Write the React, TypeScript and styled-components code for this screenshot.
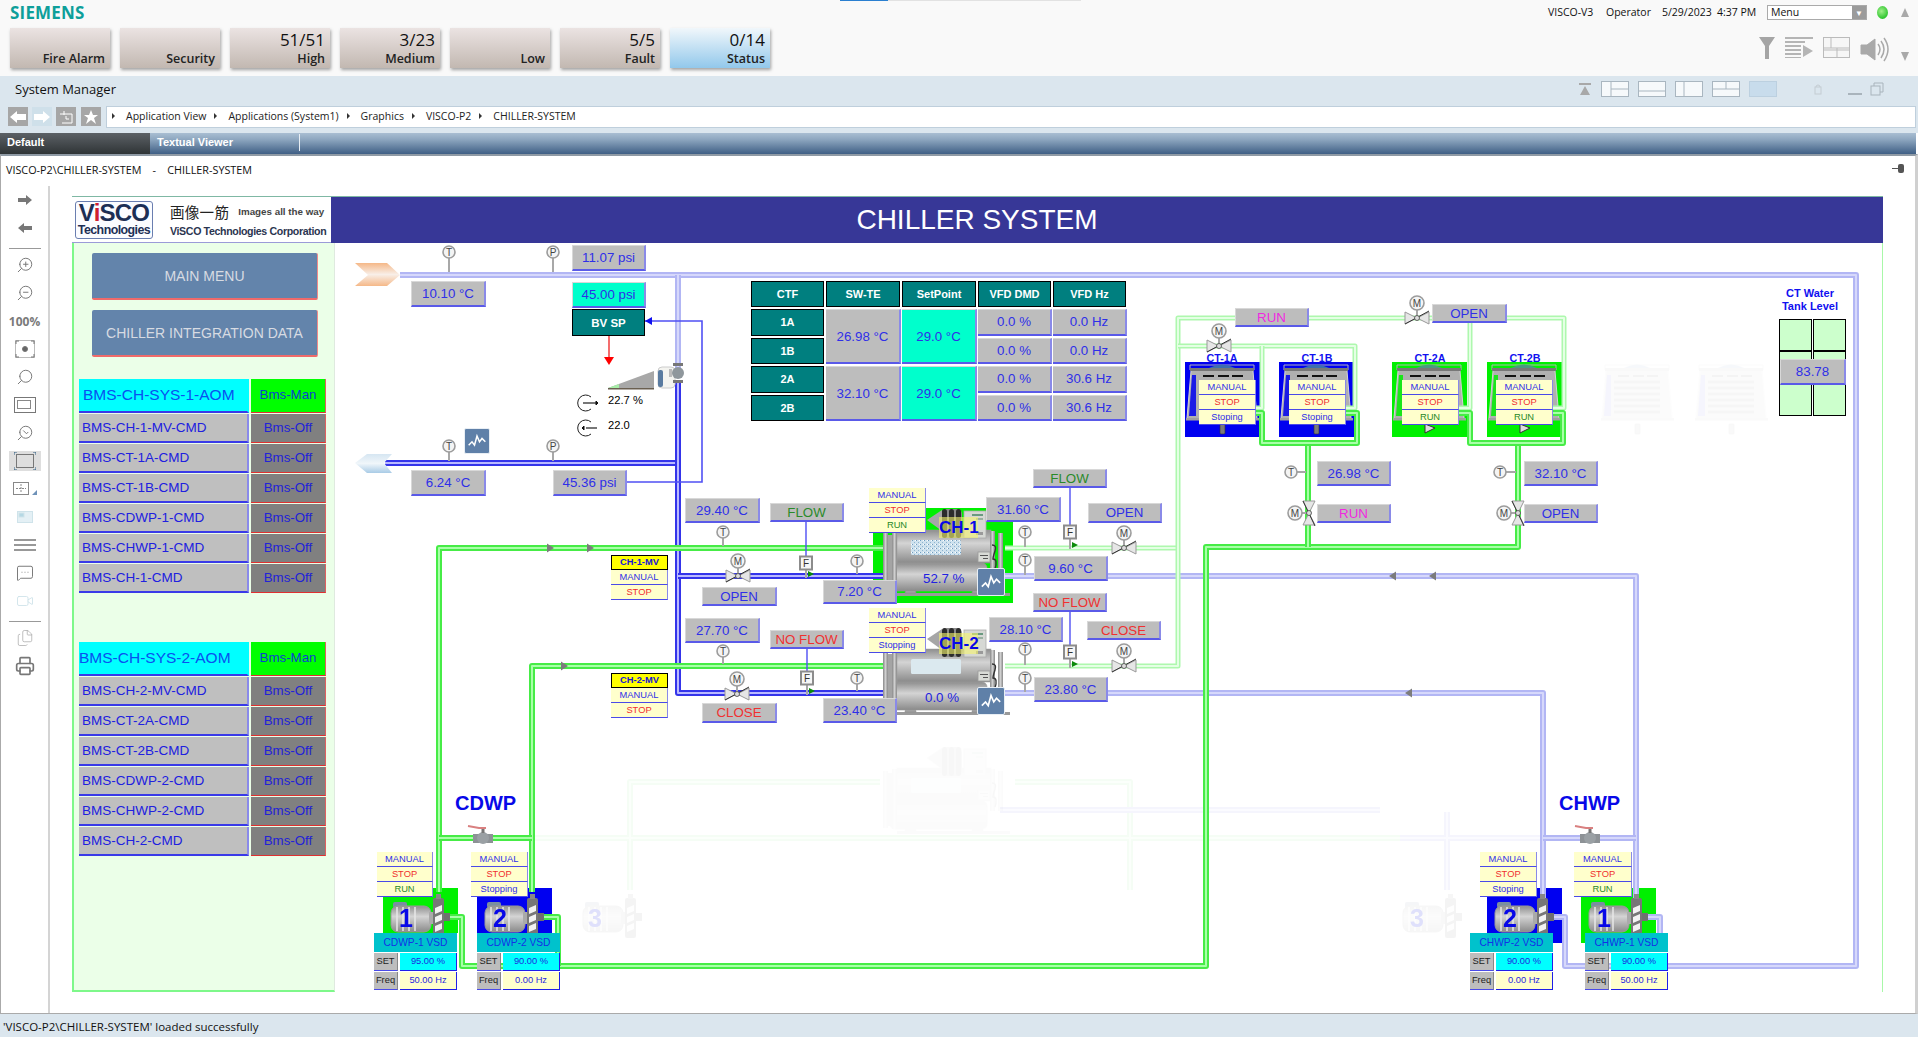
import React from "react";
import styled, { createGlobalStyle, css } from "styled-components";
import { ZoomIn, ZoomOut, Search, SearchCheck, Printer, Files, Video, MessageSquareMore } from "lucide-react";

const Global = createGlobalStyle`
  html, body { margin: 0; padding: 0; background: #fff; }
  #root { width: 1918px; height: 1037px; }
  * { box-sizing: border-box; }
`;

const Page = styled.div`
  width: 1918px;
  height: 1037px;
  display: flex;
  flex-direction: column;
  overflow: hidden;
  font-family: "Open Sans", "Liberation Sans", sans-serif;
  background: #fff;
  color: #111;
`;

/* ---------- top alarm bar ---------- */
const TopBar = styled.header`
  position: relative;
  height: 76px;
  flex: none;
  background: #f9f9f9;
  display: flex;
  justify-content: space-between;
`;
const Progress = styled.div`
  position: absolute;
  left: 840px;
  top: 0;
  width: 241px;
  height: 1px;
  background: linear-gradient(90deg, #2a7fd0 0 48px, #e2e2e2 48px);
`;
const LeftTop = styled.div`
  display: flex;
  flex-direction: column;
  padding: 3px 0 0 10px;
`;
const Brand = styled.div`
  font-family: "Open Sans", sans-serif;
  font-weight: 700;
  font-size: 17px;
  line-height: 19px;
  height: 25px;
  color: #0e9f9a;
  letter-spacing: 0.2px;
`;
const AlarmRow = styled.div`
  display: flex;
  gap: 10px;
`;
const AlarmButton = styled.div<{ $active?: boolean }>`
  width: 100px;
  height: 40px;
  background: ${(p) =>
    p.$active ? "linear-gradient(#f1f7fb, #92c8eb)" : "linear-gradient(#ebe3e2, #c2b8b1)"};
  box-shadow: 1px 2px 3px rgba(0, 0, 0, 0.35);
  display: flex;
  flex-direction: column;
  justify-content: flex-end;
  align-items: flex-end;
  padding: 0 5px 1px 0;
`;
const AlarmCount = styled.div`
  font-size: 17px;
  line-height: 21px;
  color: #111;
`;
const AlarmName = styled.div`
  font-size: 12.5px;
  line-height: 17px;
  font-weight: 600;
  color: #222;
`;
const RightTop = styled.div`
  display: flex;
  flex-direction: column;
  align-items: flex-end;
  padding: 5px 9px 0 0;
`;
const StatusLine = styled.div`
  display: flex;
  align-items: center;
  height: 14px;
  font-size: 10.5px;
`;
const StatusText = styled.span<{ $w: number }>`
  width: ${(p) => p.$w}px;
  white-space: nowrap;
`;
const MenuBox = styled.div`
  width: 100px;
  height: 15px;
  margin-right: 10px;
  border: 1px solid #aaa;
  background: #fff;
  display: flex;
  justify-content: space-between;
  align-items: stretch;
  font-size: 10.5px;
  line-height: 13px;
  padding-left: 3px;
`;
const MenuCaret = styled.div`
  width: 14px;
  background: #9b9b9b;
  color: #fff;
  font-size: 8px;
  text-align: center;
`;
const Lamp = styled.div`
  width: 11px;
  height: 13px;
  border-radius: 50%;
  background: radial-gradient(circle at 40% 40%, #a0f08a, #2fc52f 70%);
  margin-right: 13px;
`;
const ToolIcons = styled.div`
  display: flex;
  align-items: flex-start;
  gap: 10px;
  margin-top: 17px;
  margin-right: 11px;
  height: 24px;
`;
const Arrowlet = styled.div<{ $up?: boolean }>`
  width: 0;
  height: 0;
  border-left: 4px solid transparent;
  border-right: 4px solid transparent;
  ${(p) =>
    p.$up ? "border-bottom: 9px solid #a9a9a9;" : "border-top: 9px solid #a9a9a9;"}
`;
const DownSlot = styled.div`
  height: 42px;
  display: flex;
  align-items: flex-end;
  justify-content: flex-end;
  gap: 0;
`;

/* ---------- system manager band ---------- */
const Manager = styled.section`
  height: 57px;
  flex: none;
  background: #dbe6ee;
  display: flex;
  flex-direction: column;
`;
const ManagerTop = styled.div`
  height: 29px;
  display: flex;
  justify-content: space-between;
  align-items: center;
  padding: 0 32px 3px 15px;
  font-size: 13px;
`;
const PaneIcons = styled.div`
  display: flex;
  align-items: center;
  gap: 9px;
`;
const PaneIcon = styled.svg`
  width: 28px;
  height: 16px;
  display: block;
`;
const Crumbs = styled.div`
  height: 23px;
  display: flex;
  align-items: center;
  padding-left: 8px;
`;
const NavBtn = styled.div<{ $pale?: boolean; $gap: number }>`
  width: 20px;
  height: 19px;
  margin-right: ${(p) => p.$gap}px;
  background: ${(p) => (p.$pale ? "#cfe0ea" : "#a6a6a6")};
  display: flex;
  align-items: center;
  justify-content: center;
  color: #fff;
`;
const CrumbBar = styled.div`
  flex: 1;
  height: 22px;
  margin-right: 2px;
  background: #fff;
  border: 1px solid #bfcfdc;
  display: flex;
  align-items: center;
  padding: 0 0 2px 5px;
  font-size: 10.5px;
  color: #222;
`;
const Crumb = styled.span`
  white-space: nowrap;
  &::before {
    content: "";
    display: inline-block;
    border-left: 3px solid #333;
    border-top: 3px solid transparent;
    border-bottom: 3px solid transparent;
    margin: 0 11px 1px 8px;
  }
  &:first-child::before {
    margin-left: 0;
  }
`;

const TabStrip = styled.nav`
  height: 21px;
  flex: none;
  display: flex;
  background: linear-gradient(#a9bed2, #8ea7c0 30%, #3f5f85);
  margin-right: 2px;
  color: #fff;
  font-family: "Liberation Sans", sans-serif;
  font-weight: 700;
  font-size: 11px;
  line-height: 18px;
`;
const Tab = styled.div<{ $on?: boolean }>`
  width: 150px;
  padding-left: 7px;
  background: ${(p) => (p.$on ? "linear-gradient(#5c6166, #2f3436)" : "transparent")};
  ${(p) =>
    !p.$on &&
    css`
      border-right: 1px solid #e8eef4;
      height: 17px;
      margin-top: 1px;
      line-height: 16px;
    `}
`;

/* ---------- content frame ---------- */
const Frame = styled.main`
  flex: 1;
  display: flex;
  flex-direction: column;
  border-top: 2px solid #8f9aa5;
  border-left: 1px solid #aaa;
  border-right: 3px solid #d0d0d0;
  border-bottom: 1px solid #aaa;
  min-height: 0;
`;
const PathRow = styled.div`
  height: 30px;
  flex: none;
  display: flex;
  justify-content: space-between;
  align-items: center;
  padding: 0 9px 4px 5px;
  font-size: 10.8px;
  white-space: pre;
`;
const Body = styled.div`
  flex: 1;
  display: flex;
  min-height: 0;
`;
const Toolbar = styled.aside`
  width: 49px;
  flex: none;
  border-right: 2px solid #d4d4d4;
  display: flex;
  flex-direction: column;
  align-items: center;
  color: #777;
`;
const ToolItem = styled.div<{ $on?: boolean; $pale?: boolean }>`
  width: 32px;
  height: 28px;
  display: flex;
  align-items: center;
  justify-content: center;
  color: ${(p) => (p.$pale ? "#cfe3ea" : "#777")};
  background: ${(p) => (p.$on ? "linear-gradient(#fff 0 4px, #dedede 4px 24px, #fff 24px)" : "transparent")};
`;
const ToolFlip = styled.span`
  display: flex;
  transform: scaleX(-1);
`;
const ToolSep = styled.div`
  width: 32px;
  height: 10px;
  flex: none;
  border-bottom: 1px solid #999;
  margin-bottom: 2px;
  margin-top: -3px;
`;
const Percent = styled.div`
  font-weight: 700;
  font-size: 12px;
  color: #7a7a7a;
`;
const CanvasWrap = styled.div`
  margin: 10px 0 0 22px;
  width: 1811px;
  height: 796px;
  display: flex;
  flex-direction: column;
`;
const Header = styled.div`
  height: 47px;
  flex: none;
  display: flex;
  border-top: 1px solid #7fb8a4;
`;
const LogoBlock = styled.div`
  width: 259px;
  flex: none;
  display: flex;
  align-items: center;
  padding: 0 0 0 3px;
  background: #fff;
  border-bottom: 1px solid #9b9bd8;
`;
const LogoMark = styled.div`
  width: 78px;
  height: 38px;
  border: 1px solid #6a7eb0;
  border-radius: 3px;
  display: flex;
  flex-direction: column;
  align-items: center;
  font-family: "Liberation Sans", sans-serif;
  font-weight: 700;
  color: #1d2f55;
  background: #fbfcff;
`;
const LogoBig = styled.div`
  font-size: 24px;
  line-height: 22px;
  letter-spacing: -0.8px;
`;
const LogoSmall = styled.div`
  font-size: 12.4px;
  line-height: 13px;
  letter-spacing: -0.55px;
`;
const LogoDot = styled.span`
  color: #d02030;
`;
const LogoText = styled.div`
  margin-left: 17px;
  display: flex;
  flex-direction: column;
`;
const LogoTop = styled.div`
  display: flex;
  align-items: center;
  gap: 9px;
  height: 22px;
  font-family: "Liberation Sans", sans-serif;
  font-weight: 700;
  font-size: 9.8px;
  color: #444;
  white-space: nowrap;
`;
const LogoKanji = styled.span`
  font-family: "Noto Sans CJK JP", sans-serif;
  font-weight: 400;
  font-size: 14.5px;
  letter-spacing: 0.3px;
  color: #222;
`;
const LogoCorp = styled.div`
  font-family: "Liberation Sans", sans-serif;
  font-weight: 700;
  font-size: 10.6px;
  line-height: 16px;
  letter-spacing: -0.35px;
  color: #2b3550;
  white-space: nowrap;
`;
const TitleBar = styled.div`
  flex: 1;
  background: #373797;
  color: #fff;
  font-family: "Liberation Sans", sans-serif;
  font-size: 28px;
  display: flex;
  align-items: center;
  justify-content: center;
  padding-right: 260px;
`;
const Lower = styled.div`
  flex: 1;
  display: flex;
  min-height: 0;
`;
const SidePanel = styled.div`
  width: 263px;
  flex: none;
  background: #ebffe8;
  border-left: 2px solid #7ef88a;
  border-bottom: 2px solid #7ef88a;
  border-right: 1px solid #dfeadf;
  padding: 10px 0 0 5px;
  font-family: "Liberation Sans", sans-serif;
`;
const BigButton = styled.div`
  width: 226px;
  height: 47px;
  margin: 0 0 10px 13px;
  background: #6384ab;
  border-right: 1px solid #f08a8a;
  border-bottom: 2px solid #f06a6a;
  border-radius: 2px;
  color: #d7dbe2;
  font-size: 14px;
  display: flex;
  align-items: center;
  justify-content: center;
`;
const Group = styled.div<{ $top: number }>`
  margin-top: ${(p) => p.$top}px;
  display: grid;
  grid-template-columns: 170px 75px;
  column-gap: 2px;
  row-gap: 1px;
  grid-template-rows: 34px repeat(6, 29px);
`;
const RowName = styled.div<{ $head?: boolean; $tight?: boolean }>`
  background: ${(p) => (p.$head ? "#00ffff" : "#bfbfbf")};
  border-bottom: 2px solid #3a3ae8;
  border-right: 2px solid ${(p) => (p.$head ? "#00ffff" : "#8a8aea")};
  color: ${(p) => (p.$head ? "#0a50f0" : "#2020e0")};
  font-size: ${(p) => (p.$head ? 15.5 : 13.5)}px;
  line-height: ${(p) => (p.$head ? 32 : 27)}px;
  padding-left: ${(p) => (p.$tight ? 0 : p.$head ? 4 : 3)}px;
  white-space: nowrap;
`;
const RowState = styled.div<{ $man?: boolean }>`
  background: ${(p) => (p.$man ? "#00ff00" : "#808080")};
  border-bottom: 1px solid #e03030;
  border-right: 1px solid #e06060;
  color: ${(p) => (p.$man ? "#0a3fd0" : "#2222d8")};
  font-size: 13.3px;
  line-height: ${(p) => (p.$man ? 32 : 27)}px;
  text-align: center;
`;

/* ---------- free canvas of the plant diagram ---------- */
const OX = 335;
const OY = 243;
const Diagram = styled.div`
  position: relative;
  flex: 1;
  background: #fff;
  border-right: 1px solid #a8f8a8;
  font-family: "Liberation Sans", sans-serif;
  overflow: hidden;
`;
const Drawing = styled.svg`
  position: absolute;
  left: 0;
  top: 0;
  width: 1548px;
  height: 749px;
  text {
    font-family: "Liberation Sans", sans-serif;
  }
`;
const placed = css<{ $x: number; $y: number }>`
  position: absolute;
  left: ${(p) => p.$x - OX}px;
  top: ${(p) => p.$y - OY}px;
`;
type Tone = "blue" | "green" | "red" | "pink";
const toneColor: Record<Tone, string> = { blue: "#2f2fe8", green: "#2a8a2a", red: "#f03030", pink: "#f028e0" };

const ValueBox = styled.div<{ $x: number; $y: number; $w: number; $h: number; $tone: Tone; $bg?: string }>`
  ${placed}
  width: ${(p) => p.$w}px;
  height: ${(p) => p.$h}px;
  background: ${(p) => p.$bg ?? "#bdbdbd"};
  border-top: 1px solid #d8d8d8;
  border-left: 1px solid #d8d8d8;
  border-right: 2px solid #8a8ae8;
  border-bottom: 2px solid #5a5ae8;
  color: ${(p) => toneColor[p.$tone]};
  font-size: 13.3px;
  display: flex;
  align-items: center;
  justify-content: center;
  white-space: nowrap;
`;
const SetBlock = styled.div<{ $x: number; $y: number }>`
  ${placed}
  width: 73px;
  height: 27px;
  background: #007f7f;
  border: 1px solid #000;
  color: #fff;
  font-size: 11.5px;
  font-weight: 700;
  display: flex;
  align-items: center;
  justify-content: center;
`;
const Reading = styled.div<{ $x: number; $y: number }>`
  ${placed}
  font-size: 11.2px;
  color: #000;
  white-space: nowrap;
`;
const StatusStack = styled.div<{ $x: number; $y: number; $w: number }>`
  ${placed}
  width: ${(p) => p.$w}px;
  display: flex;
  flex-direction: column;
`;
const StackRow = styled.div<{ $tone: Tone }>`
  height: 15px;
  background: #ffffcc;
  color: ${(p) => toneColor[p.$tone]};
  border-bottom: 1px solid #4a4ae8;
  border-right: 1px solid #8a8ae8;
  font-size: 9.33px;
  line-height: 14px;
  text-align: center;
  white-space: nowrap;
`;
const StackHead = styled.div`
  height: 15px;
  background: #ffff00;
  border: 1px solid #000;
  color: #1515d8;
  font-size: 9.33px;
  font-weight: 700;
  line-height: 13px;
  text-align: center;
`;
const Table = styled.div<{ $x: number; $y: number }>`
  ${placed}
  display: grid;
  grid-template-columns: 75px 76px 76px 75px 75px;
  grid-template-rows: 26px repeat(4, 26.5px);
  row-gap: 2px;
  width: 377px;
`;
const TableHead = styled.div`
  margin-right: 2px;
  background: #007f7f;
  border: 1px solid #000;
  color: #fff;
  font-size: 11px;
  font-weight: 700;
  display: flex;
  align-items: center;
  justify-content: center;
`;
const TableCell = styled.div<{ $span?: boolean; $set?: boolean }>`
  grid-row: ${(p) => (p.$span ? "span 2" : "auto")};
  margin-right: 1px;
  background: ${(p) => (p.$set ? "#00ffcc" : "#bdbdbd")};
  border-top: 1px solid #d8d8d8;
  border-right: 2px solid #8a8ae8;
  border-bottom: 2px solid #5a5ae8;
  color: #2f2fe8;
  font-size: 13.3px;
  display: flex;
  align-items: center;
  justify-content: center;
  white-space: nowrap;
`;
const UnitTag = styled.div<{ $x: number; $y: number }>`
  ${placed}
  width: 39px;
  height: 21px;
  background: rgba(245, 245, 110, 0.6);
  color: #0808e8;
  font-size: 17px;
  font-weight: 700;
  line-height: 21px;
  text-align: center;
  white-space: nowrap;
`;
const LoadText = styled.div<{ $x: number; $y: number }>`
  ${placed}
  color: #2222e0;
  font-size: 13.3px;
  white-space: nowrap;
`;
const TrendButton = styled.div<{ $x: number; $y: number; $s: number }>`
  ${placed}
  width: ${(p) => p.$s}px;
  height: ${(p) => p.$s}px;
  background: #5f80a8;
  border: 1px solid #e8eef4;
  border-radius: 2px;
  display: flex;
  align-items: center;
  justify-content: center;
`;
const PumpTitle = styled.div<{ $x: number; $y: number }>`
  ${placed}
  color: #0808e8;
  font-size: 20px;
  font-weight: 700;
`;
const TowerName = styled.div<{ $x: number; $y: number }>`
  ${placed}
  width: 60px;
  text-align: center;
  color: #1010f0;
  font-size: 10.7px;
  font-weight: 700;
  line-height: 12px;
`;
const TankTitle = styled.div<{ $x: number; $y: number }>`
  ${placed}
  width: 66px;
  text-align: center;
  color: #1010f0;
  font-size: 11px;
  font-weight: 700;
  line-height: 13px;
`;
const TankBody = styled.div<{ $x: number; $y: number }>`
  ${placed}
  width: 67px;
  height: 97px;
  display: grid;
  grid-template-columns: 1fr 1fr;
  grid-template-rows: 1fr 2fr;
  column-gap: 1px;
  background: #fff;
`;
const TankPane = styled.div`
  background: #ccffcc;
  border: 1px solid #000;
`;
const Vsd = styled.div<{ $x: number; $y: number }>`
  ${placed}
  width: 83px;
  display: grid;
  grid-template-columns: 24px 57px;
  column-gap: 2px;
  row-gap: 1px;
  grid-template-rows: 19px 18px 18px;
`;
const VsdHead = styled.div`
  grid-column: 1 / 3;
  background: #00c2cc;
  color: #1330e8;
  font-size: 10.2px;
  line-height: 19px;
  text-align: center;
  white-space: nowrap;
`;
const VsdKey = styled.div`
  background: #bdbdbd;
  border-right: 1px solid #888;
  border-bottom: 1px solid #4a4ae8;
  color: #222;
  font-size: 9.3px;
  line-height: 17px;
  text-align: center;
`;
const VsdVal = styled.div<{ $set?: boolean }>`
  background: ${(p) => (p.$set ? "#00ffff" : "#ffffcc")};
  border-right: 1px solid #1f1fe8;
  border-bottom: 1px solid #1f1fe8;
  color: #1f1fe0;
  font-size: 9.3px;
  line-height: 17px;
  text-align: center;
  white-space: nowrap;
`;
const TankValue = styled(ValueBox)`
  z-index: 2;
`;

const StatusBar = styled.footer`
  height: 23px;
  flex: none;
  background: #dbe6ee;
  font-size: 11.5px;
  line-height: 26px;
  padding-left: 3px;
`;

/* ---------- drawing helpers ---------- */
type PipeKind = "dark" | "light" | "green" | "pale" | "ghost" | "ghostBlue";
const pipeStyle: Record<PipeKind, [string, string, number, number]> = {
  dark: ["#3434ea", "#b9b9ff", 6, 2],
  light: ["#b2b6f4", "#d6d8fb", 6, 2],
  green: ["#46ec46", "#a8ffa8", 6, 2],
  pale: ["#aef8ae", "#e4ffe4", 5, 2],
  ghost: ["#f5fdf5", "#fbfffb", 6, 2],
  ghostBlue: ["#f5f5fd", "#fbfbff", 6, 2],
};
const Pipe = ({ d, kind }: { d: string; kind: PipeKind }) => {
  const [outer, inner, a, b] = pipeStyle[kind];
  return (
    <g fill="none" strokeLinejoin="round">
      <path d={d} stroke={outer} strokeWidth={a} />
      <path d={d} stroke={inner} strokeWidth={b} />
    </g>
  );
};

const Sensor = ({ x, y, to, l, side }: { x: number; y: number; to: number; l: string; side?: boolean }) => (
  <g>
    {side ? (
      <line x1={x} y1={y} x2={to} y2={y} stroke="#a8a8a8" strokeWidth={2} />
    ) : (
      <line x1={x} y1={y} x2={x} y2={to} stroke="#a8a8a8" strokeWidth={2} />
    )}
    <circle cx={x} cy={y} r={6} fill="#f4f4f4" stroke="#9c9c9c" strokeWidth={1.6} />
    <text x={x} y={y + 3.6} fontSize={10} textAnchor="middle" fill="#444">
      {l}
    </text>
  </g>
);

const Flow = ({ x, y, to }: { x: number; y: number; to: number }) => (
  <g>
    <line x1={x} y1={y} x2={x} y2={to} stroke="#a8a8a8" strokeWidth={2} />
    <rect x={x - 6} y={y - 6.5} width={12} height={13} fill="#f6f6f6" stroke="#8c8c8c" strokeWidth={2} />
    <text x={x} y={y + 3.6} fontSize={10} textAnchor="middle" fill="#333">
      F
    </text>
    <path d={`M${x + 2} ${to - 7} l6 3 l-6 3 z`} fill="#0a8a0a" />
  </g>
);

const Butterfly = ({ x, y }: { x: number; y: number }) => (
  <g>
    <line x1={x} y1={y - 15} x2={x} y2={y} stroke="#a8a8a8" strokeWidth={2} />
    <circle cx={x} cy={y - 15} r={7} fill="#f4f4f4" stroke="#9c9c9c" strokeWidth={1.6} />
    <text x={x} y={y - 11.4} fontSize={10} textAnchor="middle" fill="#444">
      M
    </text>
    <path d={`M${x - 12} ${y - 6} L${x} ${y} L${x - 12} ${y + 6} Z M${x + 12} ${y - 6} L${x} ${y} L${x + 12} ${y + 6} Z`} fill="#e6e6e6" stroke="#999" />
    <line x1={x - 12} y1={y + 6} x2={x + 12} y2={y - 7} stroke="#333" strokeWidth={1} />
    <circle cx={x} cy={y} r={2.5} fill="#ddd" stroke="#444" strokeWidth={0.8} />
  </g>
);

const ButterflyUpright = ({ x, y }: { x: number; y: number }) => (
  <g>
    <line x1={x - 14} y1={y} x2={x} y2={y} stroke="#a8a8a8" strokeWidth={2} />
    <circle cx={x - 14} cy={y} r={7} fill="#f4f4f4" stroke="#9c9c9c" strokeWidth={1.6} />
    <text x={x - 14} y={y + 3.6} fontSize={10} textAnchor="middle" fill="#444">
      M
    </text>
    <path d={`M${x - 6} ${y - 12} L${x} ${y} L${x + 6} ${y - 12} Z M${x - 6} ${y + 12} L${x} ${y} L${x + 6} ${y + 12} Z`} fill="#e6e6e6" stroke="#999" />
    <line x1={x - 6} y1={y - 12} x2={x + 6} y2={y + 13} stroke="#333" strokeWidth={1} />
    <circle cx={x} cy={y} r={2.5} fill="#ddd" stroke="#444" strokeWidth={0.8} />
  </g>
);

const BallValve = ({ x, y }: { x: number; y: number }) => (
  <g>
    <rect x={x - 10} y={y - 4} width={20} height={9} fill="#8d9296" />
    <circle cx={x} cy={y} r={6} fill="#9aa0a4" />
    <rect x={x - 1.5} y={y - 10} width={3} height={5} fill="#777" />
    <path d={`M${x - 15} ${y - 12} L${x - 4} ${y - 10} L${x + 3} ${y - 10}`} stroke="#d98080" strokeWidth={2} fill="none" />
  </g>
);

const Tick = ({ x, y, dir }: { x: number; y: number; dir: 1 | -1 }) => (
  <path d={`M${x} ${y - 4.5} l${dir * 7} 4.5 l${-dir * 7} 4.5 z`} fill="#7c7c7c" />
);

const Chiller = ({ dy, frost, ghost }: { dy: number; frost?: boolean; ghost?: boolean }) => (
  <g transform={`translate(0 ${dy})`} opacity={ghost ? 0.03 : 1}>
    <rect x={897} y={593} width={113} height={3} fill="#9a9a9a" />
    <path d="M905 593 l2 -9 h7 l2 9 z M972 593 l2 -9 h7 l2 9 z" fill="#a4a4a4" stroke="#888" strokeWidth={0.6} />
    <rect x={890} y={563} width={97} height={28} rx={5} fill="url(#cyl)" stroke="#999" strokeWidth={0.6} />
    <rect x={897} y={530} width={94} height={33} fill="url(#cyl)" stroke="#a0a0a0" strokeWidth={0.5} />
    <rect x={883} y={533} width={5} height={57} fill="url(#cyl2)" />
    <rect x={888} y={535} width={4} height={53} fill="#a4a4a4" />
    <rect x={892} y={531} width={5} height={60} fill="url(#cyl2)" />
    <rect x={990} y={531} width={5} height={42} fill="url(#cyl2)" />
    <rect x={998} y={533} width={5} height={40} fill="url(#cyl2)" />
    <path d="M992 545 q5 0 3 6 t-2 8 q5 0 2 10" fill="none" stroke="#333" strokeWidth={1.4} />
    <rect x={911} y={540} width={50} height={15} rx={1.5} fill={frost ? "url(#frost)" : "#dbe9ef"} />
    <path d="M927 520 L942 510 V531 Z" fill="#a6a6a6" />
    <rect x={942} y={509} width={20} height={29} rx={5} fill="#8a8a8a" />
    <rect x={942} y={509} width={5} height={29} rx={2.5} fill="#2c2c2c" />
    <rect x={949} y={509} width={5} height={29} rx={2.5} fill="#2c2c2c" />
    <rect x={956} y={509} width={5} height={29} rx={2.5} fill="#2c2c2c" />
    <rect x={964} y={511} width={22} height={27} fill="#d6d8d4" stroke="#aaa" strokeWidth={0.8} />
    <rect x={972} y={514} width={11} height={2} fill="#6a9a80" />
    <rect x={976} y={518} width={7} height={2} fill="#9ab0a0" />
    <rect x={976} y={532} width={7} height={3} fill="#9a9a9a" />
    <rect x={978} y={552} width={12} height={10} fill="#d9dbd6" stroke="#999" strokeWidth={0.8} />
    <rect x={980} y={555} width={8} height={1} fill="#555" />
    <rect x={983} y={558} width={5} height={1} fill="#555" />
  </g>
);

const Pump = ({ x }: { x: number }) => (
  <g transform={`translate(${x} 888)`}>
    <rect x={10} y={14} width={14} height={6} rx={2} fill="#7a8ea0" />
    <rect x={8} y={18} width={40} height={26} rx={7} fill="url(#cyl)" stroke="#999" />
    <path d="M14 19 v24 M20 19 v24 M26 19 v24 M32 19 v24" stroke="#e8e8e8" strokeWidth={1.5} />
    <rect x={46} y={24} width={4} height={12} fill="#aaa" />
    <rect x={50} y={10} width={11} height={40} rx={2} fill="#777" />
    <rect x={53} y={6} width={5} height={5} fill="#888" />
    <path d="M52 20 l7 -3 v6 l-7 3 z M52 29 l7 -3 v6 l-7 3 z M52 38 l7 -3 v6 l-7 3 z" fill="#f2f2f2" />
    <rect x={61} y={25} width={6} height={8} fill="#707070" />
  </g>
);

const Tower = ({ x, on, ghost }: { x: number; on?: boolean; ghost?: boolean }) => (
  <g transform={`translate(${x} 362)`} opacity={ghost ? 0.04 : 1}>
    {!ghost && <rect x={0} y={0} width={75} height={75} fill={on ? "#00f000" : "#0000f0"} />}
    <path d="M5 3 H69 V8 H5 Z" fill="none" stroke="#b4b4b4" strokeWidth={1} />
    <path d="M24 6 q13 -7 26 0 Z" fill={on ? "#4a9a80" : "#3c6fae"} />
    <rect x={5} y={6} width={64} height={3} fill="#777" />
    <path d="M6 9 H68 L72 56 H2 Z" fill="#b0b0b0" />
    <path d="M6 9 L2 56 M68 9 L72 56" stroke="#d4d4d4" strokeWidth={1} />
    <path d="M7 13 L4 54 H11 V13 Z" fill={on ? "#00f000" : "#0000f0"} opacity={0.85} />
    <path d="M18 14 h11 M33 14 h11 M47 14 h11" stroke="#111" strokeWidth={2} />
    <rect x={1} y={56} width={73} height={2.5} fill="#a0a0a0" />
    {ghost && <path d="M14 20 H60 M14 26 H60 M14 32 H60 M14 38 H60 M14 44 H60 M14 50 H60" stroke="#444" strokeWidth={3} />}
    {on ? (
      <path d="M33 62 l10 4 l-10 5 z" fill="#ddd" stroke="#333" />
    ) : (
      <rect x={35} y={62} width={5} height={10} rx={1} fill="#7a7a7a" stroke="#333" strokeWidth={0.6} />
    )}
  </g>
);

const TrendGlyph = ({ s }: { s: number }) => (
  <svg width={s} height={s} viewBox="0 0 24 24" fill="none" stroke="#fff" strokeWidth={1.8}>
    <path d="M2 17 L6 13 L9 17 L12 6 L15 13 L18 9 L22 13" />
  </svg>
);

/* ---------- data ---------- */
type Box = [number, number, number, number, string, Tone?, string?];
const boxes: Box[] = [
  [572, 245, 646, 271, "11.07 psi"],
  [411, 281, 486, 307, "10.10 °C"],
  [572, 282, 646, 308, "45.00 psi", "blue", "#00ffcc"],
  [411, 470, 486, 496, "6.24 °C"],
  [553, 470, 627, 496, "45.36 psi"],
  [685, 498, 760, 523, "29.40 °C"],
  [770, 503, 844, 522, "FLOW", "green"],
  [1033, 469, 1107, 488, "FLOW", "green"],
  [986, 497, 1061, 522, "31.60 °C"],
  [1088, 503, 1162, 523, "OPEN"],
  [1034, 556, 1108, 581, "9.60 °C"],
  [702, 587, 777, 606, "OPEN"],
  [823, 580, 897, 604, "7.20 °C"],
  [685, 618, 760, 643, "27.70 °C"],
  [770, 630, 844, 649, "NO FLOW", "red"],
  [1033, 593, 1107, 612, "NO FLOW", "red"],
  [989, 617, 1063, 642, "28.10 °C"],
  [1087, 621, 1161, 640, "CLOSE", "red"],
  [1034, 677, 1108, 702, "23.80 °C"],
  [702, 703, 777, 723, "CLOSE", "red"],
  [823, 698, 897, 723, "23.40 °C"],
  [1235, 308, 1309, 327, "RUN", "pink"],
  [1432, 304, 1507, 323, "OPEN"],
  [1317, 461, 1391, 486, "26.98 °C"],
  [1524, 461, 1598, 486, "32.10 °C"],
  [1317, 504, 1391, 523, "RUN", "pink"],
  [1524, 504, 1598, 523, "OPEN"],
];

type Stack = [number, number, number, string, Tone];
const stacks: Stack[] = [
  [869, 488, 57, "RUN", "green"],
  [869, 608, 57, "Stopping", "blue"],
  [1199, 380, 57, "Stoping", "blue"],
  [1289, 380, 57, "Stoping", "blue"],
  [1402, 380, 57, "RUN", "green"],
  [1496, 380, 57, "RUN", "green"],
  [377, 852, 56, "RUN", "green"],
  [471, 852, 57, "Stopping", "blue"],
  [1480, 852, 57, "Stoping", "blue"],
  [1574, 852, 58, "RUN", "green"],
];

const vsds: [number, string, string, string][] = [
  [374, "CDWP-1 VSD", "95.00 %", "50.00 Hz"],
  [477, "CDWP-2 VSD", "90.00 %", "0.00 Hz"],
  [1470, "CHWP-2 VSD", "90.00 %", "0.00 Hz"],
  [1585, "CHWP-1 VSD", "90.00 %", "50.00 Hz"],
];

const rows1 = ["BMS-CH-1-MV-CMD", "BMS-CT-1A-CMD", "BMS-CT-1B-CMD", "BMS-CDWP-1-CMD", "BMS-CHWP-1-CMD", "BMS-CH-1-CMD"];
const rows2 = ["BMS-CH-2-MV-CMD", "BMS-CT-2A-CMD", "BMS-CT-2B-CMD", "BMS-CDWP-2-CMD", "BMS-CHWP-2-CMD", "BMS-CH-2-CMD"];

const alarms = [
  ["", "Fire Alarm"],
  ["", "Security"],
  ["51/51", "High"],
  ["3/23", "Medium"],
  ["", "Low"],
  ["5/5", "Fault"],
  ["0/14", "Status"],
];

const BmsGroup = ({ top, head, rows, tight }: { top: number; head: string; rows: string[]; tight?: boolean }) => (
  <Group $top={top}>
    <RowName $head $tight={tight}>
      {head}
    </RowName>
    <RowState $man>Bms-Man</RowState>
    {rows.map((r) => (
      <React.Fragment key={r}>
        <RowName>{r}</RowName>
        <RowState>Bms-Off</RowState>
      </React.Fragment>
    ))}
  </Group>
);

const PipeWork = () => (
  <>
    {/* faint pipes of the spare chiller and pumps */}
    <Pipe kind="ghost" d="M532 838 H1400 M630 890 V782 H880 M1015 782 H1130 V890" />
    <Pipe kind="ghostBlue" d="M1400 838 H1543 M1447 890 V812 M1000 810 H1380" />

    <Tower x={1185} />
    <Tower x={1279} />
    <Tower x={1392} on />
    <Tower x={1487} on />
    <Tower x={1600} ghost />
    <Tower x={1694} ghost />

    <rect x={873} y={508} width={140} height={95} fill="#00f000" />
    <rect x={383} y={888} width={75} height={45} fill="#00f000" />
    <rect x={477} y={888} width={75} height={45} fill="#0000f0" />
    <rect x={1487} y={888} width={75} height={55} fill="#0000f0" />
    <rect x={1581} y={888} width={75} height={55} fill="#00f000" />

    <Pipe kind="light" d="M400 275 H1856 V966 H1565 V917 H1550" />
    <Pipe kind="light" d="M1660 935 V917 H1645" />
    <Pipe kind="light" d="M678 275 V370" />
    <Pipe kind="light" d="M1005 576 H1636 V905" />
    <Pipe kind="light" d="M1005 693 H1543 V905" />
    <Pipe kind="light" d="M1543 838 H1636" />
    <Pipe kind="dark" d="M385 463 H678" />
    <Pipe kind="dark" d="M678 382 V693 H885" />
    <Pipe kind="dark" d="M678 576 H885" />

    <Pipe kind="pale" d="M1005 548 H1178" />
    <Pipe kind="pale" d="M1005 666 H1178 V318 H1564 V408 H1553" />
    <Pipe kind="pale" d="M1178 346 H1355 V408 H1346" />
    <Pipe kind="pale" d="M1262 346 V408 H1256" />
    <Pipe kind="pale" d="M1470 318 V408 H1459" />

    <Pipe kind="green" d="M439 892 V548 H885" />
    <Pipe kind="green" d="M532 892 V666 H885" />
    <Pipe kind="green" d="M439 838 H532" />
    <Pipe kind="green" d="M447 917 H462 V966 H1206 V547 H1518 V443" />
    <Pipe kind="green" d="M543 917 H558 V966" />
    <Pipe kind="green" d="M1308 547 V443" />
    <Pipe kind="green" d="M1256 413 H1262 V443 H1357 V413 H1346" />
    <Pipe kind="green" d="M1459 413 H1470 V443 H1563 V413 H1553" />

    <Tick x={547} y={548} dir={1} />
    <Tick x={587} y={548} dir={1} />
    <Tick x={561} y={666} dir={1} />
    <Tick x={1396} y={576} dir={-1} />
    <Tick x={1436} y={576} dir={-1} />
    <Tick x={1412} y={693} dir={-1} />
  </>
);

const Devices = () => (
  <>
    {/* inlet and outlet chevrons */}
    <path d="M355 263 H387 L400 275 L387 286 H355 L368 275 Z" fill="url(#orange)" />
    <path d="M392 454 H367 L355 463 L367 473 H392 L384 463 Z" fill="url(#sky)" />

    {/* signal lines */}
    <path d="M645 321 H702 V482 H627" fill="none" stroke="#5050f4" strokeWidth={1.6} />
    <path d="M645 321 L652 317 V325 Z" fill="#1010f0" />
    <path d="M609 336 V358" stroke="#f03030" strokeWidth={1.4} />
    <path d="M604 357 H614 L609 365 Z" fill="#f00" />
    <path d="M806 522 V558 M1070 488 V527 M807 649 V672 M1070 612 V646" stroke="#5050f4" strokeWidth={1.4} />

    {/* balancing valve with its position ramp */}
    <path d="M608 388 L654 371 V388 Z" fill="#a8a8a8" />
    <path d="M608 388 L619 384 V388 Z" fill="#a8eda8" />
    <rect x={608} y={388} width={46} height={1.5} fill="#6a5f50" />
    <rect x={658} y={367} width={17} height={21} rx={4} fill="#f4f4f0" stroke="#ccc" />
    <rect x={658} y={370} width={5} height={17} rx={2} fill="#5a7ba0" />
    <circle cx={678} cy={373} r={6} fill="#8f979c" />
    <rect x={673} y={363} width={10} height={3} fill="#777" />
    <rect x={673} y={380} width={10} height={3} fill="#777" />
    <rect x={669} y={369} width={3} height={8} fill="#bbb" />

    <g fill="none" stroke="#222" strokeWidth={1}>
      <path d="M591 397 A8 8 0 1 0 591 409" />
      <path d="M591 422 A8 8 0 1 0 591 434" />
      <path d="M583 403 H596" strokeWidth={1.6} stroke="#555" />
      <path d="M586 428 H597" strokeWidth={1.6} stroke="#555" />
    </g>
    <path d="M596 401 L598 403 L596 405 Z M584 426 L582 428 L584 430 Z" fill="#111" stroke="#111" />

    <Sensor x={449} y={252} to={272} l="T" />
    <Sensor x={553} y={252} to={272} l="P" />
    <Sensor x={449} y={446} to={461} l="T" />
    <Sensor x={553} y={446} to={461} l="P" />
    <Sensor x={723} y={532} to={546} l="T" />
    <Sensor x={857} y={561} to={574} l="T" />
    <Sensor x={1025} y={532} to={547} l="T" />
    <Sensor x={1025} y={560} to={575} l="T" />
    <Sensor x={723} y={651} to={664} l="T" />
    <Sensor x={857} y={678} to={691} l="T" />
    <Sensor x={1025} y={649} to={665} l="T" />
    <Sensor x={1025} y={678} to={692} l="T" />
    <Sensor x={1291} y={472} to={1306} l="T" side />
    <Sensor x={1500} y={472} to={1516} l="T" side />

    <Flow x={806} y={563} to={578} />
    <Flow x={1070} y={532} to={549} />
    <Flow x={807} y={678} to={695} />
    <Flow x={1070} y={652} to={668} />

    <Butterfly x={738} y={576} />
    <Butterfly x={737} y={694} />
    <Butterfly x={1124} y={548} />
    <Butterfly x={1124} y={666} />
    <Butterfly x={1417} y={318} />
    <Butterfly x={1219} y={346} />
    <ButterflyUpright x={1309} y={513} />
    <ButterflyUpright x={1518} y={513} />

    <BallValve x={483} y={838} />
    <BallValve x={1590} y={838} />

    <Chiller dy={0} frost />
    <Chiller dy={119} />
    <Chiller dy={238} ghost />

    <Pump x={383} />
    <Pump x={477} />
    <Pump x={1487} />
    <Pump x={1581} />
    <g opacity={0.08}>
      <Pump x={575} />
      <Pump x={1395} />
    </g>
    <g fontSize={25} fontWeight={700} textAnchor="middle">
      <text x={406} y={927} fill="#0808e8">1</text>
      <text x={500} y={927} fill="#0808e8">2</text>
      <text x={1510} y={927} fill="#0808e8">2</text>
      <text x={1604} y={927} fill="#0808e8">1</text>
      <text x={595} y={927} fill="#dfe0fb">3</text>
      <text x={1417} y={927} fill="#dfe0fb">3</text>
    </g>
  </>
);

export default function App() {
  return (
    <Page>
      <Global />
      <TopBar>
        <Progress />
        <LeftTop>
          <Brand>SIEMENS</Brand>
          <AlarmRow>
            {alarms.map(([n, l]) => (
              <AlarmButton key={l} $active={l === "Status"}>
                <AlarmCount>{n}</AlarmCount>
                <AlarmName>{l}</AlarmName>
              </AlarmButton>
            ))}
          </AlarmRow>
        </LeftTop>
        <RightTop>
          <StatusLine>
            <StatusText $w={58}>VISCO-V3</StatusText>
            <StatusText $w={56}>Operator</StatusText>
            <StatusText $w={55}>5/29/2023</StatusText>
            <StatusText $w={50}>4:37 PM</StatusText>
            <MenuBox>
              Menu
              <MenuCaret>▼</MenuCaret>
            </MenuBox>
            <Lamp />
            <Arrowlet $up />
          </StatusLine>
          <DownSlot>
            <ToolIcons>
              <svg width="16" height="22" viewBox="0 0 16 22">
                <path d="M0 0 H16 L10 9 V22 H6 V9 Z" fill="#a5a5a5" />
              </svg>
              <svg width="28" height="21" viewBox="0 0 28 21" fill="#b5b5b5">
                <path d="M0 0 h28 v2 h-28 z M0 4 h20 v2 h-20 z M0 8 h16 v2 h-16 z M0 12 h16 v2 h-16 z M0 16 h16 v2 h-16 z M0 20 h16 v1 h-16 z M18 8 l10 6 l-10 6 z" />
              </svg>
              <svg width="27" height="21" viewBox="0 0 27 21" fill="#f6f6f6" stroke="#bbb">
                <rect x=".5" y=".5" width="26" height="20" />
                <path d="M8 .5 V11 M.5 11 H26 M14 11 V20 M.5 13 H26" />
              </svg>
              <svg width="30" height="25" viewBox="0 0 30 25" fill="none" stroke="#a9a9a9">
                <path d="M1 8 H7 L15 2 V23 L7 17 H1 Z" fill="#a9a9a9" />
                <path d="M18 7 q4 5 0 11 M21 4 q6 8 0 17 M24 1 q8 11 0 23" strokeWidth="1.5" />
              </svg>
            </ToolIcons>
            <Arrowlet />
          </DownSlot>
        </RightTop>
      </TopBar>

      <Manager>
        <ManagerTop>
          System Manager
          <PaneIcons>
            <svg width="14" height="13" viewBox="0 0 14 13" fill="#a8a8a8">
              <path d="M1 0 h12 v2 h-12 z M7 3 l5 9 h-10 z" />
            </svg>
            {["M10 1 V15 M10 8 H27", "M1 10 H27", "M9 1 V15", "M1 8 H27 M14 1 V8", ""].map((d, i) => (
              <PaneIcon key={i} viewBox="0 0 28 16">
                <rect x=".5" y=".5" width="27" height="15" fill={i === 4 ? "#c8dcec" : "#f6f9fb"} stroke={i === 4 ? "#bcd0e0" : "#a9b6c0"} />
                <path d={d} stroke="#a9b6c0" fill="none" />
              </PaneIcon>
            ))}
            <svg width="26" height="16" viewBox="0 0 26 16" fill="none" stroke="#c4ccd2" style={{ marginLeft: 27 }}>
              <rect x="2" y="6" width="6" height="7" />
              <path d="M3 6 a2 2 0 0 1 4 0" />
            </svg>
            <svg width="38" height="16" viewBox="0 0 38 16" fill="none" stroke="#a9b4bc">
              <path d="M0 13 H14" strokeWidth="2" />
              <rect x="23" y="5" width="9" height="9" />
              <path d="M26 5 V2 H35 V11 H32" />
            </svg>
          </PaneIcons>
        </ManagerTop>
        <Crumbs>
          <NavBtn $gap={4}>
            <svg width="16" height="12" viewBox="0 0 16 12" fill="#fff"><path d="M0 6 L7 0 V3 H16 V9 H7 V12 Z" /></svg>
          </NavBtn>
          <NavBtn $pale $gap={4}>
            <svg width="16" height="12" viewBox="0 0 16 12" fill="#fff"><path d="M16 6 L9 0 V3 H0 V9 H9 V12 Z" /></svg>
          </NavBtn>
          <NavBtn $gap={5}>
            <svg width="14" height="14" viewBox="0 0 14 14" fill="none" stroke="#fff"><path d="M1 4 H13 V13 H3 M7 6 V9 H10 M5 1 V5" /></svg>
          </NavBtn>
          <NavBtn $gap={5}>
            <svg width="14" height="14" viewBox="0 0 14 14" fill="#fff"><path d="M7 0 L9 5 H14 L10 8 L12 14 L7 10 L2 14 L4 8 L0 5 H5 Z" /></svg>
          </NavBtn>
          <CrumbBar>
            <Crumb>Application View</Crumb>
            <Crumb>Applications (System1)</Crumb>
            <Crumb>Graphics</Crumb>
            <Crumb>VISCO-P2</Crumb>
            <Crumb>CHILLER-SYSTEM</Crumb>
          </CrumbBar>
        </Crumbs>
      </Manager>

      <TabStrip>
        <Tab $on>Default</Tab>
        <Tab>Textual Viewer</Tab>
      </TabStrip>

      <Frame>
        <PathRow>
          <span>{"VISCO-P2\\CHILLER-SYSTEM    -    CHILLER-SYSTEM"}</span>
          <svg width="14" height="10" viewBox="0 0 14 10" fill="#555">
            <path d="M0 4 H6 V5 H0 Z" />
            <rect x="6" y="0" width="6" height="9" rx="2" />
          </svg>
        </PathRow>
        <Body>
          <Toolbar>
            <ToolItem>
              <svg width="14" height="10" viewBox="0 0 14 10" fill="#777"><path d="M14 5 L8 0 V3 H0 V7 H8 V10 Z" /></svg>
            </ToolItem>
            <ToolItem>
              <svg width="14" height="10" viewBox="0 0 14 10" fill="#777"><path d="M0 5 L6 0 V3 H14 V7 H6 V10 Z" /></svg>
            </ToolItem>
            <ToolSep />
            <ToolItem><ToolFlip><ZoomIn size={18} strokeWidth={1.3} /></ToolFlip></ToolItem>
            <ToolItem><ToolFlip><ZoomOut size={18} strokeWidth={1.3} /></ToolFlip></ToolItem>
            <ToolItem><Percent>100%</Percent></ToolItem>
            <ToolItem>
              <svg width="20" height="18" viewBox="0 0 20 18" fill="none" stroke="#777">
                <rect x=".5" y=".5" width="19" height="17" stroke="#bbb" />
                <circle cx="10" cy="9" r="2.5" fill="#666" />
                <path d="M1 4 V1 H4 M16 1 H19 V4 M19 14 V17 H16 M4 17 H1 V14" />
              </svg>
            </ToolItem>
            <ToolItem><ToolFlip><Search size={18} strokeWidth={1.3} /></ToolFlip></ToolItem>
            <ToolItem>
              <svg width="22" height="16" viewBox="0 0 22 16" fill="none" stroke="#777">
                <rect x=".5" y=".5" width="21" height="15" />
                <rect x="3.5" y="3.5" width="13" height="8" stroke="#888" />
              </svg>
            </ToolItem>
            <ToolItem><ToolFlip><SearchCheck size={18} strokeWidth={1.3} /></ToolFlip></ToolItem>
            <ToolItem $on>
              <svg width="22" height="18" viewBox="0 0 22 18" fill="none" stroke="#2f5d80">
                <rect x="2.5" y="2.5" width="17" height="13" stroke="#777" />
                <path d="M0 3 V0 H3 M19 0 H22 V3 M22 15 V18 H19 M3 18 H0 V15" />
              </svg>
            </ToolItem>
            <ToolItem>
              <svg width="24" height="14" viewBox="0 0 24 14" fill="none" stroke="#888">
                <rect x=".5" y=".5" width="15" height="12" />
                <path d="M8 2 V11 M3 6.5 H13" strokeDasharray="2 1" />
                <path d="M19 13 L24 8 V13 Z" fill="#6f92b8" stroke="none" />
              </svg>
            </ToolItem>
            <ToolItem $pale>
              <svg width="20" height="16" viewBox="0 0 20 16" fill="#e4f0f5" stroke="#cfe3ea">
                <rect x="2.5" y="2.5" width="15" height="11" />
                <rect x="4" y="4" width="5" height="4" fill="#b5d8e4" />
              </svg>
            </ToolItem>
            <ToolItem>
              <svg width="22" height="12" viewBox="0 0 22 12" stroke="#777" strokeWidth="1.3"><path d="M0 1 H22 M0 6 H22 M0 11 H22" /></svg>
            </ToolItem>
            <ToolItem><MessageSquareMore size={18} strokeWidth={1.3} /></ToolItem>
            <ToolItem $pale><Video size={18} strokeWidth={1.2} /></ToolItem>
            <ToolSep />
            <ToolItem><Files size={18} strokeWidth={1} color="#aaa" /></ToolItem>
            <ToolItem><Printer size={20} strokeWidth={2} /></ToolItem>
          </Toolbar>

          <CanvasWrap>
            <Header>
              <LogoBlock>
                <LogoMark>
                  <LogoBig>V<LogoDot>i</LogoDot>SCO</LogoBig>
                  <LogoSmall>Technologies</LogoSmall>
                </LogoMark>
                <LogoText>
                  <LogoTop>
                    <LogoKanji>画像一筋</LogoKanji>
                    <span>Images all the way</span>
                  </LogoTop>
                  <LogoCorp>ViSCO Technologies Corporation</LogoCorp>
                </LogoText>
              </LogoBlock>
              <TitleBar>CHILLER SYSTEM</TitleBar>
            </Header>
            <Lower>
              <SidePanel>
                <BigButton>MAIN MENU</BigButton>
                <BigButton>CHILLER INTEGRATION DATA</BigButton>
                <BmsGroup top={22} head="BMS-CH-SYS-1-AOM" rows={rows1} />
                <BmsGroup top={49} head="BMS-CH-SYS-2-AOM" rows={rows2} tight />
              </SidePanel>
              <Diagram>
                <Drawing viewBox={`${OX} ${OY} 1548 749`}>
                  <defs>
                    <linearGradient id="cyl" x1="0" y1="0" x2="0" y2="1">
                      <stop offset="0" stopColor="#8e8e8e" />
                      <stop offset=".4" stopColor="#d4d4d4" />
                      <stop offset="1" stopColor="#8a8a8a" />
                    </linearGradient>
                    <linearGradient id="cyl2" x1="0" y1="0" x2="1" y2="0">
                      <stop offset="0" stopColor="#888" />
                      <stop offset=".5" stopColor="#cfcfcf" />
                      <stop offset="1" stopColor="#888" />
                    </linearGradient>
                    <linearGradient id="orange" x1="0" y1="0" x2="0" y2="1">
                      <stop offset="0" stopColor="#f5b888" />
                      <stop offset=".5" stopColor="#f8efe8" />
                      <stop offset="1" stopColor="#f5b888" />
                    </linearGradient>
                    <linearGradient id="sky" x1="0" y1="0" x2="0" y2="1">
                      <stop offset="0" stopColor="#d6e6f2" />
                      <stop offset=".5" stopColor="#f0f6fa" />
                      <stop offset="1" stopColor="#a9cbe6" />
                    </linearGradient>
                    <pattern id="frost" width="4" height="4" patternUnits="userSpaceOnUse">
                      <rect width="4" height="4" fill="#cfe2ee" />
                      <rect x="0" y="0" width="1" height="1" fill="#6f9cc0" />
                      <rect x="2" y="2" width="1" height="1" fill="#8fb5d0" />
                      <rect x="3" y="0" width="1" height="1" fill="#fff" />
                    </pattern>
                  </defs>
                  <PipeWork />
                  <Devices />
                </Drawing>

                <SetBlock $x={572} $y={309}>BV SP</SetBlock>
                <Reading $x={608} $y={394}>22.7 %</Reading>
                <Reading $x={608} $y={419}>22.0</Reading>
                <TrendButton $x={464} $y={428} $s={26}><TrendGlyph s={20} /></TrendButton>

                <Table $x={751} $y={281}>
                  <TableHead>CTF</TableHead>
                  <TableHead>SW-TE</TableHead>
                  <TableHead>SetPoint</TableHead>
                  <TableHead>VFD DMD</TableHead>
                  <TableHead>VFD Hz</TableHead>
                  <TableHead>1A</TableHead>
                  <TableCell $span>26.98 °C</TableCell>
                  <TableCell $span $set>29.0 °C</TableCell>
                  <TableCell>0.0 %</TableCell>
                  <TableCell>0.0 Hz</TableCell>
                  <TableHead>1B</TableHead>
                  <TableCell>0.0 %</TableCell>
                  <TableCell>0.0 Hz</TableCell>
                  <TableHead>2A</TableHead>
                  <TableCell $span>32.10 °C</TableCell>
                  <TableCell $span $set>29.0 °C</TableCell>
                  <TableCell>0.0 %</TableCell>
                  <TableCell>30.6 Hz</TableCell>
                  <TableHead>2B</TableHead>
                  <TableCell>0.0 %</TableCell>
                  <TableCell>30.6 Hz</TableCell>
                </Table>

                {boxes.map(([x, y, x2, y2, t, tone, bg]) => (
                  <ValueBox key={`${x}-${y}`} $x={x} $y={y} $w={x2 - x} $h={y2 - y} $tone={tone ?? "blue"} $bg={bg}>
                    {t}
                  </ValueBox>
                ))}

                {stacks.map(([x, y, w, last, tone]) => (
                  <StatusStack key={`${x}-${y}`} $x={x} $y={y} $w={w}>
                    <StackRow $tone="blue">MANUAL</StackRow>
                    <StackRow $tone="red">STOP</StackRow>
                    <StackRow $tone={tone}>{last}</StackRow>
                  </StatusStack>
                ))}
                <StatusStack $x={611} $y={555} $w={57}>
                  <StackHead>CH-1-MV</StackHead>
                  <StackRow $tone="blue">MANUAL</StackRow>
                  <StackRow $tone="red">STOP</StackRow>
                </StatusStack>
                <StatusStack $x={611} $y={673} $w={57}>
                  <StackHead>CH-2-MV</StackHead>
                  <StackRow $tone="blue">MANUAL</StackRow>
                  <StackRow $tone="red">STOP</StackRow>
                </StatusStack>

                <UnitTag $x={939} $y={517}>CH-1</UnitTag>
                <UnitTag $x={939} $y={633}>CH-2</UnitTag>
                <LoadText $x={923} $y={571}>52.7 %</LoadText>
                <LoadText $x={925} $y={690}>0.0 %</LoadText>
                <TrendButton $x={977} $y={568} $s={28}><TrendGlyph s={22} /></TrendButton>
                <TrendButton $x={977} $y={687} $s={28}><TrendGlyph s={22} /></TrendButton>

                <TowerName $x={1192} $y={352}>CT-1A</TowerName>
                <TowerName $x={1287} $y={352}>CT-1B</TowerName>
                <TowerName $x={1400} $y={352}>CT-2A</TowerName>
                <TowerName $x={1495} $y={352}>CT-2B</TowerName>

                <TankTitle $x={1777} $y={287}>CT Water Tank Level</TankTitle>
                <TankBody $x={1779} $y={319}>
                  <TankPane />
                  <TankPane />
                  <TankPane />
                  <TankPane />
                </TankBody>
                <TankValue $x={1780} $y={359} $w={66} $h={26} $tone="blue">83.78</TankValue>

                <PumpTitle $x={455} $y={792}>CDWP</PumpTitle>
                <PumpTitle $x={1559} $y={792}>CHWP</PumpTitle>

                {vsds.map(([x, name, set, freq]) => (
                  <Vsd key={name} $x={x} $y={933}>
                    <VsdHead>{name}</VsdHead>
                    <VsdKey>SET</VsdKey>
                    <VsdVal $set>{set}</VsdVal>
                    <VsdKey>Freq</VsdKey>
                    <VsdVal>{freq}</VsdVal>
                  </Vsd>
                ))}
              </Diagram>
            </Lower>
          </CanvasWrap>
        </Body>
      </Frame>

      <StatusBar>'VISCO-P2\CHILLER-SYSTEM' loaded successfully</StatusBar>
    </Page>
  );
}
